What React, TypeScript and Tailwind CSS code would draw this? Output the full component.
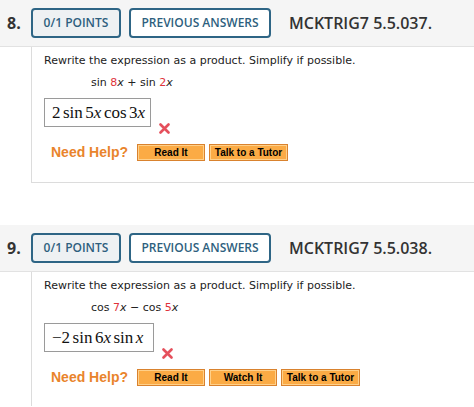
const sans = "font-['Open_Sans',sans-serif]"
const verdana = "font-['DejaVu_Sans',Verdana,sans-serif]"

function HelpButton({ label }: { label: string }) {
  return (
    <span className="flex h-[17px] items-center justify-center whitespace-nowrap border border-[#d9822e] bg-[#fbab45] px-[2px] shadow-[inset_0_0_0_1px_#ffd089] font-['Liberation_Sans',Arial,sans-serif] text-[10px] font-bold text-black">
      {label}
    </span>
  )
}

function WrongMark() {
  return (
    <svg width="11" height="11" viewBox="0 0 11 11" className="mt-[25px] ml-[8px] shrink-0">
      <path d="M1.5 1.5 L9.5 9.5 M9.5 1.5 L1.5 9.5" stroke="#e5505c" strokeWidth="2.6" strokeLinecap="round" />
    </svg>
  )
}

// math pieces, spaced the way the rendered formula is
function M({ children, gap }: { children: React.ReactNode; gap?: boolean }) {
  return <span className={gap ? "ml-[2.5px]" : ""}>{children}</span>
}

type Question = {
  num: string
  code: string
  fn: string
  a: string
  op: string
  b: string
  answer: React.ReactNode
  helps: { label: string; w: string }[]
  boxW: string
}

function QuestionBlock({ q, tall }: { q: Question; tall?: boolean }) {
  return (
    <div>
      <div className="flex h-[47px] items-center whitespace-nowrap border-b border-[#e2e2e2] bg-[#f5f5f5]">
        <span className={`${sans} w-[31px] shrink-0 pl-[7px] text-[16px] font-bold text-[#333]`}>{q.num}</span>
        <span className={`${sans} flex h-[30px] w-[90px] shrink-0 items-center justify-center rounded-[4px] border-2 border-[#2e6585] bg-[#eef1f3] text-[12px] font-semibold text-[#2e5f7e]`}>
          0/1 POINTS
        </span>
        <span className={`${sans} ml-[8px] flex h-[30px] w-[142px] shrink-0 items-center justify-center rounded-[4px] border-2 border-[#2e6585] bg-white text-[12px] font-semibold text-[#2e5f7e]`}>
          PREVIOUS ANSWERS
        </span>
        <span className={`${sans} ml-[18px] text-[16px] font-semibold text-[#333]`}>{q.code}</span>
      </div>
      <div className={`ml-[31px] border-l border-[#dcdcdc] pl-[12px] pt-[7px] ${tall ? "h-[134px]" : "h-[136px] border-b"}`}>
        <p className={`${verdana} whitespace-nowrap text-[11px] leading-[14px] text-[#222]`}>Rewrite the expression as a product. Simplify if possible.</p>
        <p className={`${verdana} mt-[8px] whitespace-nowrap pl-[47px] text-[11px] leading-[14px] text-[#222]`}>
          {q.fn} <span className="text-[#e0323a]">{q.a}</span><i>x</i> {q.op} {q.fn} <span className="text-[#e0323a]">{q.b}</span><i>x</i>
        </p>
        <div className="mt-[8px] flex">
          <div className={`${q.boxW} flex h-[29px] shrink-0 items-center whitespace-nowrap border border-[#9a9a9a] pl-[7px] font-['Liberation_Serif','Times_New_Roman',serif] text-[17px] text-[#111]`}>
            {q.answer}
          </div>
          <WrongMark />
        </div>
        <div className="mt-[8px] flex items-center">
          <span className="ml-[7px] w-[86px] shrink-0 whitespace-nowrap font-['Liberation_Sans',Arial,sans-serif] text-[14px] font-bold text-[#e9842c]">Need Help?</span>
          <div className="flex gap-[4px]">
            {q.helps.map((h) => (
              <div key={h.label} className={h.w}>
                <HelpButton label={h.label} />
              </div>
            ))}
          </div>
        </div>
      </div>
    </div>
  )
}

export default function App() {
  const q1: Question = {
    num: "8.",
    code: "MCKTRIG7 5.5.037.",
    fn: "sin",
    a: "8",
    op: "+",
    b: "2",
    boxW: "w-[107px]",
    answer: (
      <>
        <M>2</M>
        <M gap>sin</M>
        <M gap>5<i>x</i></M>
        <M gap>cos</M>
        <M gap>3<i>x</i></M>
      </>
    ),
    helps: [
      { label: "Read It", w: "w-[68px]" },
      { label: "Talk to a Tutor", w: "w-[79px]" },
    ],
  }
  const q2: Question = {
    num: "9.",
    code: "MCKTRIG7 5.5.038.",
    fn: "cos",
    a: "7",
    op: "\u2212",
    b: "5",
    boxW: "w-[110px]",
    answer: (
      <>
        <M>−2</M>
        <M gap>sin</M>
        <M gap>6<i>x</i></M>
        <M gap>sin</M>
        <M gap><i>x</i></M>
      </>
    ),
    helps: [
      { label: "Read It", w: "w-[68px]" },
      { label: "Watch It", w: "w-[68px]" },
      { label: "Talk to a Tutor", w: "w-[79px]" },
    ],
  }

  return (
    <div className="h-[407px] w-[474px] overflow-hidden bg-white">
      <QuestionBlock q={q1} />
      <div className="h-[42px]" />
      <QuestionBlock q={q2} tall />
    </div>
  )
}
